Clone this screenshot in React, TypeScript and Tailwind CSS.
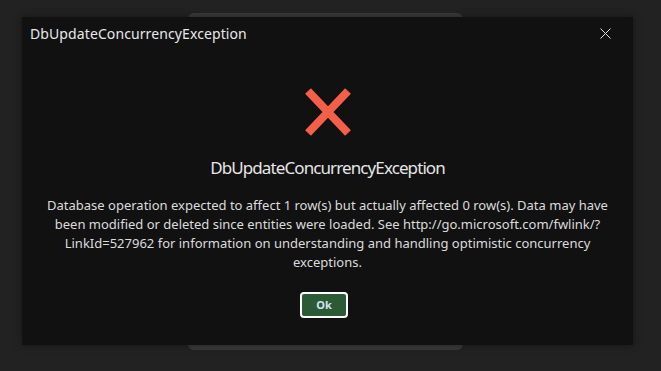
import React from "react";

// Dialog shown when a save hits a concurrency conflict
const message =
  "Database operation expected to affect 1 row(s) but actually affected 0 row(s). Data may have been modified or deleted since entities were loaded. See http://go.microsoft.com/fwlink/?LinkId=527962 for information on understanding and handling optimistic concurrency exceptions.";

const App = () => {
  return (
    <div
      className="relative w-[661px] h-[371px] bg-[#222222] overflow-hidden"
      style={{ fontFamily: '"Noto Sans", "Open Sans", sans-serif' }}
    >
      {/* Window behind the dialog */}
      <div className="absolute left-[188px] top-[13px] w-[275px] h-[337px] rounded-[6px] bg-[#3a3a3a]" />

      {/* Dialog */}
      <div className="absolute left-[22px] top-[17px] w-[611px] h-[328px] bg-[#111111] flex flex-col shadow-[0_0_8px_rgba(0,0,0,0.4)]">
        {/* Title bar */}
        <div className="flex items-center justify-between h-[32px] pl-[8px] pr-[22px]">
          <span className="text-[14px] text-[#e8e8e8] tracking-[0.1px]">DbUpdateConcurrencyException</span>
          <svg width="11" height="11" viewBox="0 0 11 11">
            <path d="M0.5 0.5 L10.5 10.5 M10.5 0.5 L0.5 10.5" stroke="#e0e0e0" strokeWidth="1" />
          </svg>
        </div>

        {/* Body */}
        <div className="flex flex-col items-center">
          {/* Error icon */}
          <svg className="mt-[38px]" width="48" height="50" viewBox="0 0 48 50">
            <path d="M4 4 L44 46 M44 4 L4 46" stroke="#f2604a" strokeWidth="8" strokeLinecap="butt" />
          </svg>

          <h1 className="mt-[18px] text-[17px] leading-[26px] tracking-[-0.9px] text-[#e6e6e6]">
            DbUpdateConcurrencyException
          </h1>

          <p className="mt-[15px] w-[586px] text-center text-[13px] leading-[19px] text-[#dcdcdc]">{message}</p>

          <button className="mt-[20px] mr-[7px] w-[48px] h-[26px] rounded-[4px] border-2 border-white bg-[#2d5a36] text-[11px] font-bold text-[#cfe3f0]">
            Ok
          </button>
        </div>
      </div>
    </div>
  );
};

export default App;
